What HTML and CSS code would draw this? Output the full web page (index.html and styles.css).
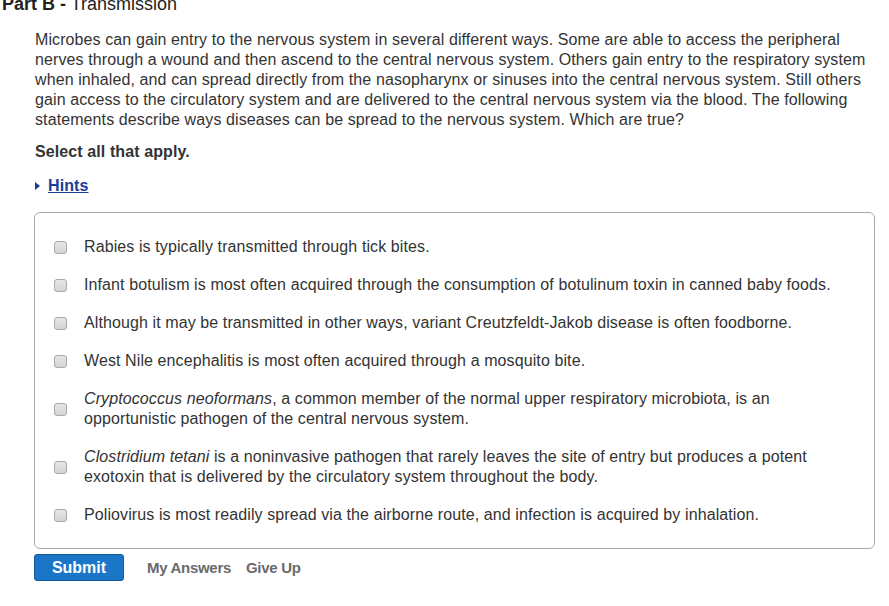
FILE: index.html
```html
<!DOCTYPE html>
<html>
<head>
<meta charset="utf-8">
<link rel="stylesheet" href="styles.css">
</head>
<body>
<h2 class="title"><b>Part B -</b> Transmission</h2>
<div class="content">
  <p class="intro">Microbes can gain entry to the nervous system in several different ways. Some are able to access the peripheral nerves through a wound and then ascend to the central nervous system. Others gain entry to the respiratory system when inhaled, and can spread directly from the nasopharynx or sinuses into the central nervous system. Still others gain access to the circulatory system and are delivered to the central nervous system via the blood. The following statements describe ways diseases can be spread to the nervous system. Which are true?</p>
  <p class="select">Select all that apply.</p>
  <div class="hints"><span class="tri"></span><a href="#">Hints</a></div>
  <div class="box">
    <label class="opt"><span class="cb"></span><span class="txt">Rabies is typically transmitted through tick bites.</span></label>
    <label class="opt"><span class="cb"></span><span class="txt">Infant botulism is most often acquired through the consumption of botulinum toxin in canned baby foods.</span></label>
    <label class="opt"><span class="cb"></span><span class="txt">Although it may be transmitted in other ways, variant Creutzfeldt-Jakob disease is often foodborne.</span></label>
    <label class="opt"><span class="cb"></span><span class="txt">West Nile encephalitis is most often acquired through a mosquito bite.</span></label>
    <label class="opt"><span class="cb"></span><span class="txt"><i>Cryptococcus neoformans</i>, a common member of the normal upper respiratory microbiota, is an opportunistic pathogen of the central nervous system.</span></label>
    <label class="opt"><span class="cb"></span><span class="txt"><i>Clostridium tetani</i> is a noninvasive pathogen that rarely leaves the site of entry but produces a potent exotoxin that is delivered by the circulatory system throughout the body.</span></label>
    <label class="opt"><span class="cb"></span><span class="txt">Poliovirus is most readily spread via the airborne route, and infection is acquired by inhalation.</span></label>
  </div>
  <div class="actions">
    <button class="submit">Submit</button>
    <a class="link" href="#">My Answers</a>
    <a class="link" href="#">Give Up</a>
  </div>
</div>
</body>
</html>
```
FILE: styles.css
```css
html, body {
  margin: 0;
  padding: 0;
  background: #fff;
}
body {
  font-family: "Liberation Sans", Arial, sans-serif;
  color: #333;
  font-size: 16px;
  letter-spacing: 0.1px;
}
.title {
  margin: -7px 0 0 2px;
  font-size: 18px;
  line-height: 22px;
  font-weight: normal;
  color: #222;
  letter-spacing: 0;
}
.title b {
  font-weight: bold;
}
.content {
  padding: 0 14px 0 34px;
}
.intro {
  margin: 15px 0 0 1px;
  line-height: 20px;
  padding-right: 6px;
}
.select {
  margin: 12px 0 0 1px;
  font-weight: bold;
  line-height: 20px;
}
.hints {
  margin: 14px 0 0 1px;
  display: flex;
  align-items: center;
  height: 20px;
}
.tri {
  width: 0;
  height: 0;
  border-top: 4.5px solid transparent;
  border-bottom: 4.5px solid transparent;
  border-left: 5px solid #1a3d8f;
  margin-right: 8px;
}
.hints a {
  color: #1a3d99;
  font-weight: bold;
  text-decoration: underline;
}
.box {
  margin-top: 16px;
  border: 1px solid #aaa;
  border-radius: 6px;
  padding: 24px 20px 23px 19px;
  display: flex;
  flex-direction: column;
  gap: 18px;
}
.opt {
  display: flex;
  align-items: center;
  line-height: 20px;
}
.cb {
  flex: none;
  width: 11px;
  height: 11px;
  border: 1px solid #a9a9a9;
  border-radius: 3px;
  background: linear-gradient(#e6e6e6, #d4d4d4);
  margin-right: 17px;
}
.txt i {
  font-style: italic;
}
.actions {
  margin-top: 5px;
  display: flex;
  align-items: center;
}
.submit {
  width: 90px;
  height: 27px;
  background: #1b76c8;
  border: 1px solid #14599a;
  border-radius: 3px;
  color: #fff;
  font-family: "Liberation Sans", Arial, sans-serif;
  font-weight: bold;
  font-size: 16px;
  padding: 0;
  margin-right: 23px;
}
.link {
  color: #6a6a6a;
  font-weight: bold;
  text-decoration: none;
  margin-right: 15px;
  font-size: 15px;
  letter-spacing: -0.3px;
}
```
